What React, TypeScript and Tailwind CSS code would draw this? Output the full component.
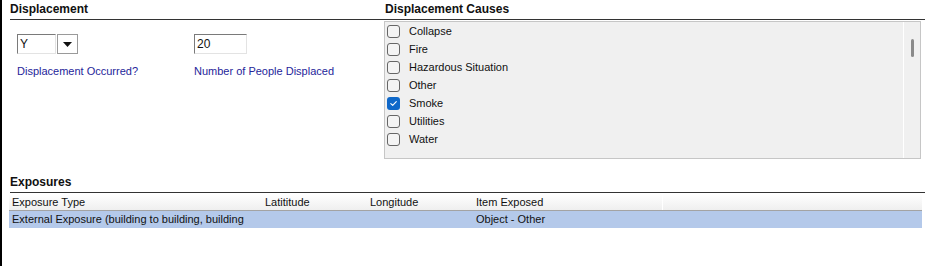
import React from 'react'

const FONT = "font-['Tahoma','Liberation_Sans',Arial,sans-serif]"

const causes: { label: string; checked?: boolean }[] = [
  { label: 'Collapse' },
  { label: 'Fire' },
  { label: 'Hazardous Situation' },
  { label: 'Other' },
  { label: 'Smoke', checked: true },
  { label: 'Utilities' },
  { label: 'Water' },
]

function Check({ checked }: { checked?: boolean }) {
  if (checked) {
    return (
      <span className="flex h-[13px] w-[13px] items-center justify-center rounded-[3px] bg-[#0f68c9]">
        <svg width="9" height="9" viewBox="0 0 9 9" fill="none">
          <path d="M1.8 4.6 L3.7 6.4 L7.3 2.6" stroke="white" strokeWidth="1.1" strokeLinecap="round" strokeLinejoin="round" />
        </svg>
      </span>
    )
  }
  return <span className="block h-[13px] w-[13px] rounded-[3px] border border-[#666] bg-[#f4f4f4]" />
}

function Heading({ children }: { children: React.ReactNode }) {
  return <h2 className="h-[19px] pt-[2px] text-[12px] font-bold leading-[14px] text-[#111]">{children}</h2>
}

function Sunken({ value, width }: { value: string; width: string }) {
  return (
    <div className={`${width} h-[20px] border border-t-[#7a7a7a] border-l-[#7a7a7a] border-r-[#e3e3e3] border-b-[#e3e3e3] bg-white pl-[2px] text-[12px] leading-[18px] text-[#111]`}>
      {value}
    </div>
  )
}

export default function App() {
  return (
    <div className={`relative h-[266px] w-[925px] overflow-hidden border-l-2 border-black bg-white ${FONT}`}>
      <div className="pl-[8px]">
        {/* Displacement + causes */}
        <div className="flex">
          <div className="w-[374px]">
            <Heading>Displacement</Heading>
            <div className="h-px bg-[#333]" />
            <div className="mt-[14px] flex">
              <div className="ml-[7px] w-[177px]">
                <div className="flex gap-px">
                  <Sunken value="Y" width="w-[39px]" />
                  <div className="flex h-[20px] w-[21px] items-center justify-center border border-[#9a9a9a] bg-white">
                    <svg width="9" height="5" viewBox="0 0 9 5"><path d="M0 0 H9 L4.5 5 Z" fill="#111" /></svg>
                  </div>
                </div>
                <p className="mt-[10px] text-[11px] leading-[14px] text-[#25259a]">Displacement Occurred?</p>
              </div>
              <div>
                <Sunken value="20" width="w-[53px]" />
                <p className="mt-[10px] text-[11px] leading-[14px] text-[#25259a]">Number of People Displaced</p>
              </div>
            </div>
          </div>
          <div className="flex-1">
            <div className="pl-px">
              <Heading>Displacement Causes</Heading>
            </div>
            <div className="h-px bg-[#333]" />
            <div className="mr-[4px] mt-px flex h-[138px] border border-[#c6c6c6] bg-[#f0f0f0]">
              <ul className="flex-1 pl-[2px]">
                {causes.map((c) => (
                  <li key={c.label} className="flex h-[18px] items-center gap-[9px] text-[11px] text-[#111]">
                    <Check checked={c.checked} />
                    {c.label}
                  </li>
                ))}
              </ul>
              <div className="w-[17px] border-l border-white pt-[17px]">
                <div className="ml-[7px] h-[18px] w-[3px] rounded-full bg-[#8a8a8a]" />
              </div>
            </div>
          </div>
        </div>

        {/* Exposures */}
        <div className="mt-[14px]">
          <Heading>Exposures</Heading>
          <div className="h-px bg-[#333]" />
          <div className="-ml-[1px] mr-[3px] mt-px">
            <div className="flex h-[17px] border-b border-[#a3a3a3] bg-gradient-to-b from-white to-[#efefef] text-[11px] leading-[16px] text-[#111]">
              <div className="w-[253px] pl-[3px]">Exposure Type</div>
              <div className="w-[105px] pl-[3px]">Latititude</div>
              <div className="w-[106px] pl-[3px]">Longitude</div>
              <div className="w-[190px] border-r border-white pl-[3px]">Item Exposed</div>
              <div className="flex-1" />
            </div>
            <div className="flex h-[17px] bg-[#b4c9ea] text-[11px] leading-[17px] text-[#111]">
              <div className="w-[253px] pl-[3px]">External Exposure (building to building, building</div>
              <div className="w-[105px]" />
              <div className="w-[106px]" />
              <div className="w-[190px] pl-[3px]">Object - Other</div>
              <div className="flex-1" />
            </div>
          </div>
        </div>
      </div>
    </div>
  )
}
